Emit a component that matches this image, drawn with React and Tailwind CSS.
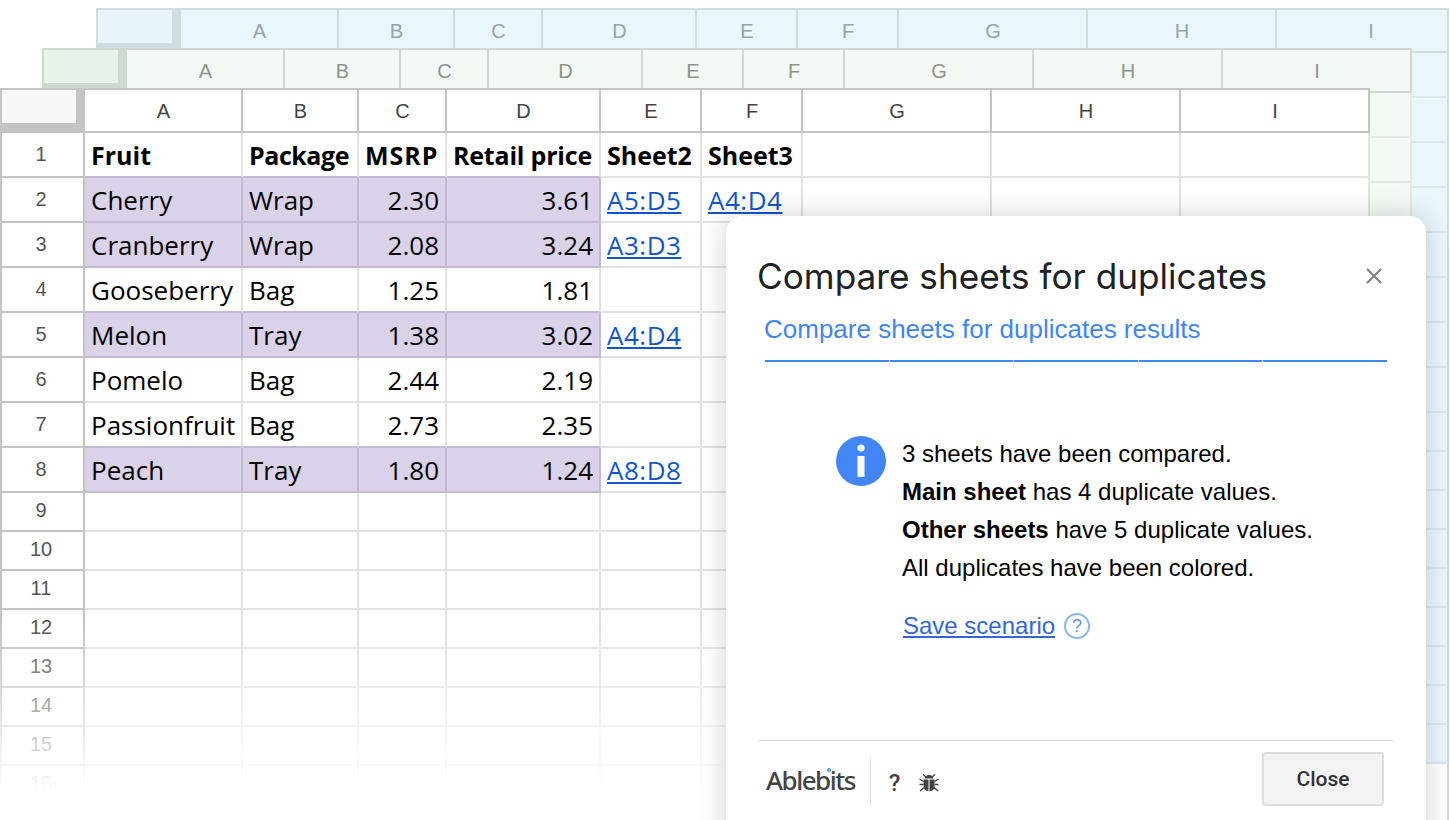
import React from "react";

const cols = ["A","B","C","D","E","F","G","H","I"];
const widths = ["w-[158px]","w-[116px]","w-[88px]","w-[154px]","w-[101px]","w-[101px]","w-[189px]","w-[189px]","w-[189px]"];
const boldFit = ["", "tracking-[-0.45px]", "tracking-[1px]", "tracking-[-0.2px]", "", ""];

const rows = [
  { n: 1, bold: true, next: true, cells: ["Fruit","Package","MSRP","Retail price","Sheet2","Sheet3"] },
  { n: 2, p: true, cells: ["Cherry","Wrap","2.30","3.61","A5:D5","A4:D4"] },
  { n: 3, p: true, cells: ["Cranberry","Wrap","2.08","3.24","A3:D3",""] },
  { n: 4, next: true, cells: ["Gooseberry","Bag","1.25","1.81","",""] },
  { n: 5, p: true, cells: ["Melon","Tray","1.38","3.02","A4:D4",""] },
  { n: 6, cells: ["Pomelo","Bag","2.44","2.19","",""] },
  { n: 7, next: true, cells: ["Passionfruit","Bag","2.73","2.35","",""] },
  { n: 8, p: true, cells: ["Peach","Tray","1.80","1.24","A8:D8",""] },
];

const themes = {
  main: { hdr: "border-[#c4c4c4]", lineR: "border-r-[#e2e2e2]", lineB: "border-b-[#e2e2e2]", bg: "bg-white", corner: "bg-[#c4c4c4]", cornerIn: "bg-[#f8f8f8]", hdrText: "text-[#444444]", numText: "text-[#555555]" },
  green: { hdr: "border-[#d0d9d0]", lineR: "border-r-[#e4ebe3]", lineB: "border-b-[#e4ebe3]", bg: "bg-[#f3faf3]", corner: "bg-[#d0d9d0]", cornerIn: "bg-[#eaf4ea]", hdrText: "text-[#8e938e]", numText: "text-[#8e938e]" },
  blue: { hdr: "border-[#cfdde3]", lineR: "border-r-[#dbe7ed]", lineB: "border-b-[#dbe7ed]", bg: "bg-[#e9f6fc]", corner: "bg-[#cfdde3]", cornerIn: "bg-[#e9f3fa]", hdrText: "text-[#96a3ab]", numText: "text-[#96a3ab]" },
};

const HEAD = "font-['Liberation_Sans',Arial,sans-serif] text-[20px]";

function DataRow({ r, t, empty }) {
  const tall = r.n <= 8;
  return (
    <div className={`flex ${tall ? "h-[45px]" : "h-[39px]"}`}>
      <div className={`w-[85px] shrink-0 border-l-2 border-r-2 border-b-2 ${t.hdr} ${t.bg} flex items-center justify-center ${HEAD} ${t.numText} pr-[3px] ${tall ? "pb-[2px]" : "pb-[4px]"}`}>{empty ? null : r.n}</div>
      {cols.map((c, i) => {
        const v = r.cells ? r.cells[i] : "";
        const isNum = i === 2 || i === 3;
        const isLink = i >= 4 && r.n > 1 && v;
        const purple = r.p && i < 4;
        const edgeB = (r.p || r.next) && i < 4;
        const font = r.bold
          ? `font-['Open_Sans',sans-serif] text-[25px] font-bold pt-[2px] ${boldFit[i] || ""}`
          : "font-['Open_Sans',sans-serif] text-[26px]";
        return (
          <div
            key={c}
            className={`${widths[i]} shrink-0 border-r-2 border-b-2 ${purple ? "border-r-[#c1bad0]" : t.lineR} ${edgeB ? "border-b-[#c1bad0]" : t.lineB} ${purple ? "bg-[#d9d2e9]" : t.bg} flex items-center overflow-hidden whitespace-nowrap px-[6px] leading-none ${isNum && !r.bold ? "justify-end" : ""} ${font} text-black`}
          >
            {empty ? null : isLink ? <span className="text-[#1155cc] underline tracking-[0.5px]">{v}</span> : v}
          </div>
        );
      })}
    </div>
  );
}

function Sheet({ theme, withData }) {
  const t = themes[theme];
  const list = [...rows];
  const last = withData ? 16 : 17;
  for (let n = 9; n <= last; n++) list.push({ n });
  return (
    <div className={`w-[1370px] border-t-2 ${t.hdr}`}>
      <div className="flex h-[43px]">
        <div className={`w-[85px] shrink-0 border-l-2 ${t.hdr} ${t.corner}`}>
          <div className={`w-[74px] h-[33px] ${t.cornerIn}`} />
        </div>
        {cols.map((c, i) => (
          <div key={c} className={`${widths[i]} shrink-0 border-r-2 border-b-2 ${t.hdr} ${t.bg} flex items-center justify-center pl-[1px] ${HEAD} ${t.hdrText}`}>{c}</div>
        ))}
      </div>
      {list.map((r) => (
        <DataRow key={r.n} r={r} t={t} empty={!withData} />
      ))}
    </div>
  );
}

export default function App() {
  return (
    <div className="relative w-[1450px] h-[820px] overflow-hidden bg-white">
      <div className="absolute left-[96px] top-[8px] w-[1353px] h-[812px] overflow-hidden border-r-2 border-[#cfdde3]">
        <Sheet theme="blue" />
      </div>
      <div className="absolute left-[42px] top-[48px] h-[772px] w-[1370px] overflow-hidden">
        <Sheet theme="green" />
      </div>
      <div className="absolute left-0 top-[88px] h-[732px] w-[1370px] overflow-hidden bg-white">
        <Sheet theme="main" withData />
      </div>

      <div className="absolute left-0 top-[625px] w-[1370px] h-[195px] bg-gradient-to-b from-white/0 to-white to-85%" />

      <div className="absolute left-[726px] top-[216px] w-[700px] h-[640px] rounded-[16px] bg-white shadow-[0_0_28px_rgba(0,0,0,0.18)] px-[32px] flex flex-col">
        <div className="flex items-center justify-between pt-[37px] pr-[12px]">
          <h1 className="font-['Inter',sans-serif] text-[35.2px] leading-[46px] text-[#202124] -ml-[1px]">Compare sheets for duplicates</h1>
          <svg width="16" height="16" viewBox="0 0 16 16" className="text-[#808080]" fill="none" stroke="currentColor" strokeWidth="2"><path d="M1 1 15 15M15 1 1 15" /></svg>
        </div>
        <div className="ml-[6px] mt-[14px] font-['Liberation_Sans',Arial,sans-serif] text-[26px] leading-[32px] text-[#4285f4]">Compare sheets for duplicates results</div>
        <div className="ml-[7px] mt-[15px] flex gap-[1px] w-[622px]">
          {[0,1,2,3,4].map((i) => (<div key={i} className="h-[2px] flex-1 bg-[#4285f4]" />))}
        </div>
        <div className="flex ml-[78px] mt-[74px]">
          <svg width="50" height="50" viewBox="0 0 50 50" className="shrink-0"><circle cx="25" cy="25" r="25" fill="#4285f4" /><circle cx="25" cy="12" r="3.6" fill="#fff" /><rect x="21.5" y="20" width="7" height="21" fill="#fff" /></svg>
          <div className="ml-[16px] -mt-[1px] font-['Liberation_Sans',Arial,sans-serif] text-[24px] leading-[38px] text-black">
            <p>3 sheets have been compared.</p>
            <p><b>Main sheet</b> has 4 duplicate values.</p>
            <p><b>Other sheets</b> have 5 duplicate values.</p>
            <p>All duplicates have been colored.</p>
            <div className="mt-[20px] ml-[1px] flex items-center gap-[9px]">
              <a className="text-[#3367d6] underline">Save scenario</a>
              <span className="w-[26px] h-[26px] rounded-full border-2 border-[#8ab4f8] flex items-center justify-center text-[18px] leading-none text-[#5f8fe8]">?</span>
            </div>
          </div>
        </div>
        <div className="absolute left-[32px] right-[32px] top-[524px] border-t border-[#dddddd] h-[90px] flex items-start">
          <div className="relative ml-[8px] mt-[23px] font-['Noto_Sans',sans-serif] font-medium text-[26px] leading-[32px] tracking-[-1.5px] text-[#444444]">
            Ablebits
            <span className="absolute left-[61px] top-[4px] w-[4px] h-[4px] rounded-full bg-[#4aa8f0]" />
          </div>
          <div className="ml-[15px] mt-[17px] w-px h-[46px] bg-[#dddddd]" />
          <span className="ml-[18px] mt-[28px] font-['Roboto',sans-serif] font-medium text-[24px] leading-[28px] text-[#444444]">?</span>
          <svg width="20" height="20" viewBox="0 0 20 20" className="ml-[18px] mt-[32px]" fill="#444444">
            <path d="M6 5.500a4 3.500 0 0 1 8 0z" />
            <path d="M4.500 6.500h5v11.500c-3 0-5-2-5-5zM10.500 6.500h5v7c0 3-2 4.500-5 4.500z" />
            <path d="M4 1.500 7 4M16 1.500 13 4M.5 6l4 2.500M19.500 6l-4 2.500M.5 11.500h4M19.500 11.500h-4M1 18l4-3.500M19 18l-4-3.500" fill="none" stroke="#444444" strokeWidth="1.3" />
          </svg>
          <button className="ml-auto mr-[10px] mt-[11px] w-[122px] h-[54px] pt-[1px] rounded-[4px] bg-[#f3f3f3] border-2 border-[#dddddd] font-['Roboto',sans-serif] font-medium text-[21px] text-[#333333]">Close</button>
        </div>
      </div>
    </div>
  );
}
